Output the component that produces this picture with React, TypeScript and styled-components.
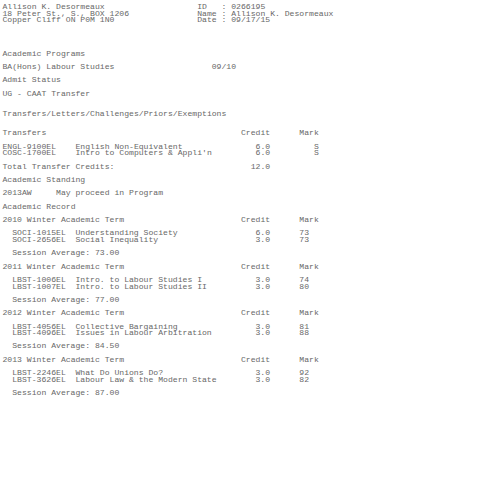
import React from "react";
import styled, { createGlobalStyle } from "styled-components";

const LH = 6.66;

const Global = createGlobalStyle`
  html, body { margin: 0; padding: 0; background: #ffffff; }
`;

const Page = styled.div`
  padding: 4px 0 0 2.5px;
  font-family: "Liberation Mono", "Courier New", monospace;
  font-size: 8.12px;
  line-height: ${LH}px;
  color: #686868;
  white-space: pre;
`;

const Line = styled.div<{ $skip?: number; $indent?: number }>`
  display: grid;
  height: ${LH}px;
  margin-top: ${(p) => (p.$skip ?? 0) * LH}px;
  padding-left: ${(p) => p.$indent ?? 0}ch;
`;

const HeaderLine = styled(Line)`
  grid-template-columns: 40ch auto;
`;

const ProgramLine = styled(Line)`
  grid-template-columns: 43ch auto;
`;

const StandingLine = styled(Line)`
  grid-template-columns: 11ch auto;
`;

const TableLine = styled(Line)`
  grid-template-columns: 49ch 6ch 6ch 4ch;
`;

const CourseLine = styled(Line)<{ $code: number }>`
  grid-template-columns: ${(p) => p.$code}ch 34ch 6ch 6ch 4ch;
`;

const Cell = styled.span<{ $right?: boolean }>`
  text-align: ${(p) => (p.$right ? "right" : "left")};
`;

type Course = { code: string; title: string; credit: string; mark: string };
type Term = { name: string; courses: Course[]; avg: string };

const terms: Term[] = [
  {
    name: "2010 Winter Academic Term",
    courses: [
      { code: "SOCI-1015EL", title: "Understanding Society", credit: "6.0", mark: "73" },
      { code: "SOCI-2656EL", title: "Social Inequality", credit: "3.0", mark: "73" },
    ],
    avg: "73.00",
  },
  {
    name: "2011 Winter Academic Term",
    courses: [
      { code: "LBST-1006EL", title: "Intro. to Labour Studies I", credit: "3.0", mark: "74" },
      { code: "LBST-1007EL", title: "Intro. to Labour Studies II", credit: "3.0", mark: "80" },
    ],
    avg: "77.00",
  },
  {
    name: "2012 Winter Academic Term",
    courses: [
      { code: "LBST-4056EL", title: "Collective Bargaining", credit: "3.0", mark: "81" },
      { code: "LBST-4096EL", title: "Issues in Labour Arbitration", credit: "3.0", mark: "88" },
    ],
    avg: "84.50",
  },
  {
    name: "2013 Winter Academic Term",
    courses: [
      { code: "LBST-2246EL", title: "What Do Unions Do?", credit: "3.0", mark: "92" },
      { code: "LBST-3626EL", title: "Labour Law & the Modern State", credit: "3.0", mark: "82" },
    ],
    avg: "87.00",
  },
];

const transfers: Course[] = [
  { code: "ENGL-9100EL", title: "English Non-Equivalent", credit: "6.0", mark: "S" },
  { code: "COSC-1700EL", title: "Intro to Computers & Appli'n", credit: "6.0", mark: "S" },
];

function TableHead({ label, skip }: { label: string; skip: number }) {
  return (
    <TableLine $skip={skip}>
      <Cell>{label}</Cell>
      <Cell>Credit</Cell>
      <Cell />
      <Cell>Mark</Cell>
    </TableLine>
  );
}

export default function App() {
  return (
    <>
      <Global />
      <Page>
        <HeaderLine>
          <Cell>Allison K. Desormeaux</Cell>
          <Cell>ID   : 0266195</Cell>
        </HeaderLine>
        <HeaderLine>
          <Cell>18 Peter St., S., BOX 1206</Cell>
          <Cell>Name : Allison K. Desormeaux</Cell>
        </HeaderLine>
        <HeaderLine>
          <Cell>Copper Cliff ON P0M 1N0</Cell>
          <Cell>Date : 09/17/15</Cell>
        </HeaderLine>

        <Line $skip={4}>Academic Programs</Line>
        <ProgramLine $skip={1}>
          <Cell>BA(Hons) Labour Studies</Cell>
          <Cell>09/10</Cell>
        </ProgramLine>
        <Line $skip={1}>Admit Status</Line>
        <Line $skip={1}>UG - CAAT Transfer</Line>
        <Line $skip={2}>Transfers/Letters/Challenges/Priors/Exemptions</Line>

        <TableHead label="Transfers" skip={2} />
        {transfers.map((c, i) => (
          <CourseLine key={c.code} $code={15} $skip={i === 0 ? 1 : 0}>
            <Cell>{c.code}</Cell>
            <Cell>{c.title}</Cell>
            <Cell $right>{c.credit}</Cell>
            <Cell />
            <Cell $right>{c.mark}</Cell>
          </CourseLine>
        ))}
        <TableLine $skip={1}>
          <Cell>Total Transfer Credits:</Cell>
          <Cell $right>12.0</Cell>
        </TableLine>

        <Line $skip={1}>Academic Standing</Line>
        <StandingLine $skip={1}>
          <Cell>2013AW</Cell>
          <Cell>May proceed in Program</Cell>
        </StandingLine>
        <Line $skip={1}>Academic Record</Line>

        {terms.map((t) => (
          <React.Fragment key={t.name}>
            <TableHead label={t.name} skip={1} />
            {t.courses.map((c, i) => (
              <CourseLine key={c.code} $code={13} $indent={2} $skip={i === 0 ? 1 : 0}>
                <Cell>{c.code}</Cell>
                <Cell>{c.title}</Cell>
                <Cell $right>{c.credit}</Cell>
                <Cell />
                <Cell>{c.mark}</Cell>
              </CourseLine>
            ))}
            <Line $skip={1} $indent={2}>
              Session Average: {t.avg}
            </Line>
          </React.Fragment>
        ))}
      </Page>
    </>
  );
}
